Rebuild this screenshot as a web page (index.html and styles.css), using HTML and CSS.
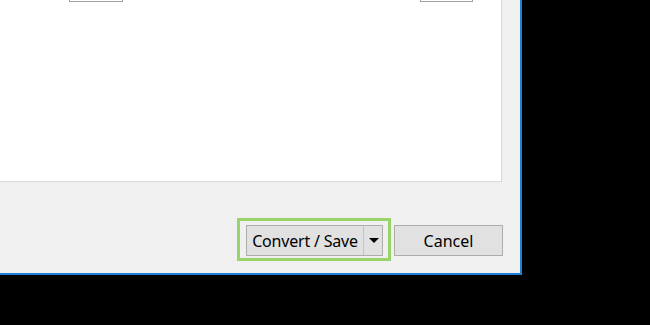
FILE: index.html
```html
<!DOCTYPE html>
<html>
<head>
<meta charset="utf-8">
<link rel="stylesheet" href="styles.css">
</head>
<body>
<div class="window">
  <div class="panel">
    <div class="group">
      <div class="fields">
        <div class="field field-a"></div>
        <div class="field field-b"></div>
      </div>
    </div>
  </div>
  <div class="actions">
    <div class="highlight">
      <div class="split">
        <div class="split-main">Convert / Save</div>
        <div class="split-arrow"><span class="tri"></span></div>
      </div>
    </div>
    <div class="btn cancel">Cancel</div>
  </div>
</div>
</body>
</html>
```
FILE: styles.css
```css
html, body {
  margin: 0;
  padding: 0;
}
body {
  background: #000;
  width: 650px;
  height: 325px;
  overflow: hidden;
  font-family: "Noto Sans", "Open Sans", sans-serif;
}
.window {
  width: 520px;
  height: 273px;
  background: #f0f0f0;
  border-right: 2px solid #1d7fd5;
  border-bottom: 2px solid #1d7fd5;
  display: flex;
  flex-direction: column;
}
.panel {
  width: 501px;
  height: 181px;
  background: #fff;
  border-right: 1px solid #dadada;
  border-bottom: 1px solid #dadada;
}
.group {
  width: 486px;
  height: 13px;
  border-right: 1px solid #dcdcdc;
  border-bottom: 1px solid #dcdcdc;
  box-shadow: 0 1px 0 #ededed;
}
.fields {
  display: flex;
  margin-top: -20px;
}
.field {
  box-sizing: border-box;
  height: 22px;
  border: 1px solid #a0a0a0;
  background: #fff;
}
.field-a {
  margin-left: 69px;
  width: 54px;
}
.field-b {
  margin-left: 297px;
  width: 53px;
}
.actions {
  display: flex;
  justify-content: flex-end;
  align-items: flex-start;
  padding-right: 17px;
  margin-top: 36px;
}
.highlight {
  border: 3px solid #9bd36b;
  padding: 4px 5px 2px 6px;
}
.split {
  box-sizing: border-box;
  display: flex;
  width: 137px;
  height: 31px;
  background: #e1e1e1;
  border: 1px solid #adadad;
}
.split-main {
  box-sizing: border-box;
  width: 117px;
  border-right: 1px solid #c4c4c4;
  display: flex;
  align-items: center;
  justify-content: center;
  font-size: 16px;
  color: #000;
  letter-spacing: -0.2px;
}
.split-arrow {
  flex: 1;
  display: flex;
  align-items: center;
  justify-content: center;
}
.tri {
  width: 0;
  height: 0;
  border-left: 5px solid transparent;
  border-right: 5px solid transparent;
  border-top: 5px solid #000;
  margin-left: 1px;
}
.btn {
  box-sizing: border-box;
  height: 31px;
  background: #e1e1e1;
  border: 1px solid #adadad;
  display: flex;
  align-items: center;
  justify-content: center;
  font-size: 16px;
  color: #000;
}
.cancel {
  width: 109px;
  margin-left: 3px;
  margin-top: 7px;
}
```
